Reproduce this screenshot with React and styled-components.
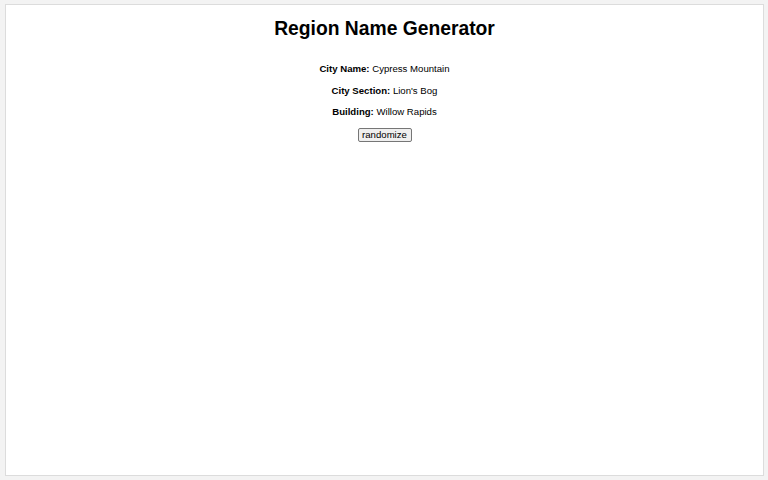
import React, { useState } from "react";
import styled, { createGlobalStyle } from "styled-components";

const cities = ["Cypress Mountain", "Oak Hollow", "Stone Harbor", "Ember Falls"];
const sections = ["Lion's Bog", "Eagle's Rest", "Fox Meadow", "Crow Hill"];
const buildings = ["Willow Rapids", "Iron Keep", "Amber Hall", "Misty Tower"];

const pick = (list) => list[Math.floor(Math.random() * list.length)];

const GlobalStyle = createGlobalStyle`
	html, body {
		margin: 0;
		height: 100%;
		background: #f3f3f3;
	}
	body {
		font-family: "Liberation Sans", Arial, sans-serif;
		padding: 4px 4px 4px 5px;
		box-sizing: border-box;
	}
	#root {
		height: 100%;
	}
`;

const Panel = styled.div`
	height: 100%;
	box-sizing: border-box;
	background: #fff;
	border: 1px solid #dcdcdc;
	display: flex;
	flex-direction: column;
	align-items: center;
	color: #000;
`;

const Title = styled.h1`
	font-size: 19.3px;
	font-weight: bold;
	line-height: 22px;
	margin: 13px 0 23px;
`;

const Row = styled.p`
	font-size: 9.6px;
	margin: 0 0 9.5px;
	line-height: 12px;

	b {
		font-weight: bold;
	}
`;

const Button = styled.button`
	font-family: "Liberation Sans", Arial, sans-serif;
	font-size: 9.6px;
	line-height: 10px;
	height: 14px;
	width: 54px;
	padding: 0;
	margin-top: 0;
	background: #efefef;
	border: 1px solid #767676;
	border-radius: 2px;
	color: #000;
	cursor: pointer;
`;

export default function App() {
	const [state, setState] = useState({
		city: "Cypress Mountain",
		section: "Lion's Bog",
		building: "Willow Rapids",
	});

	function randomize() {
		setState({ city: pick(cities), section: pick(sections), building: pick(buildings) });
	}

	return (
		<>
			<GlobalStyle />
			<Panel>
				<Title>Region Name Generator</Title>
				<Row>
					<b>City Name:</b> {state.city}
				</Row>
				<Row>
					<b>City Section:</b> {state.section}
				</Row>
				<Row>
					<b>Building:</b> {state.building}
				</Row>
				<Button onClick={randomize}>randomize</Button>
			</Panel>
		</>
	);
}
